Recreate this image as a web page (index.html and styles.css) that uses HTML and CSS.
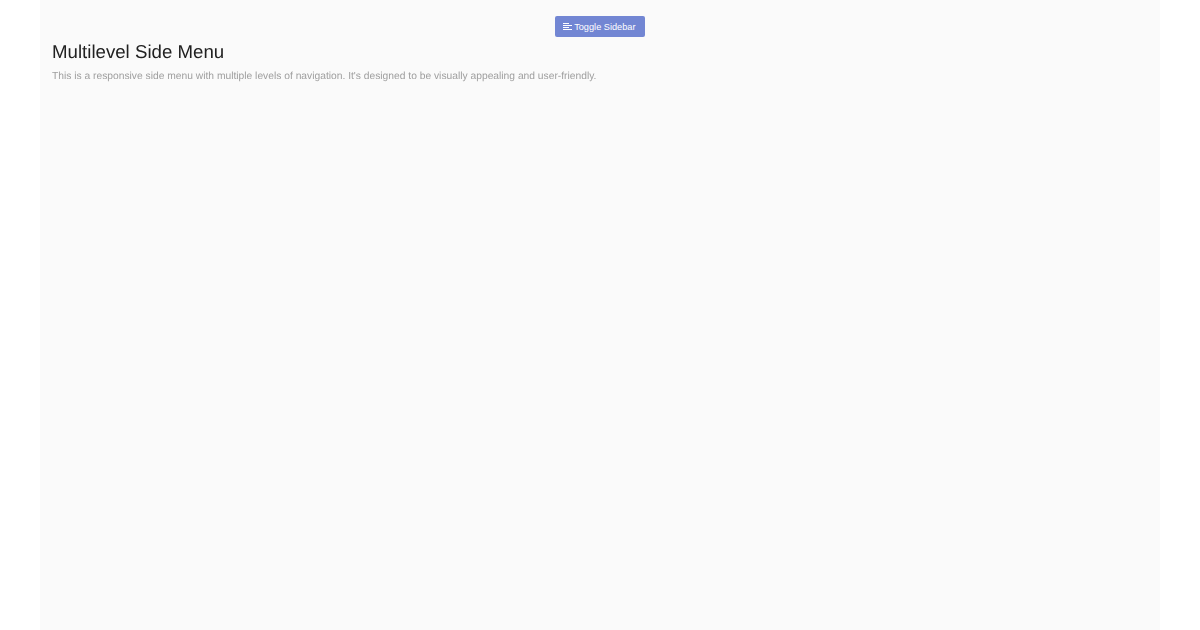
FILE: index.html
```html
<!DOCTYPE html>
<html lang="en">
    <head>
        <meta charset="UTF-8">
        <meta name="viewport" content="width=device-width, initial-scale=1.0">
        <title>Multilevel Side Menu</title>
        <link rel="stylesheet" href="styles.css">
    </head>
    <body>
        <main class="content">
            <div class="toolbar">
                <button class="toggle-btn" type="button">
                    <svg class="toggle-icon" viewBox="0 0 9 8" width="9" height="8" aria-hidden="true">
                        <path d="M0 0.5H6M0 2.5H9M0 4.5H6M0 6.5H9" stroke="#fff" stroke-width="1" fill="none"/>
                    </svg>
                    Toggle Sidebar
                </button>
            </div>
            <div class="intro">
                <h1>Multilevel Side Menu</h1>
                <p>This is a responsive side menu with multiple levels of navigation. It's designed to be visually appealing and user-friendly.</p>
            </div>
        </main>
    </body>
</html>
```

FILE: styles.css
```css
* {
    box-sizing: border-box;
}
html, body {
    height: 100%;
}
body {
    margin: 0;
    background-color: #fff;
    font-family: "Liberation Sans", Arial, sans-serif;
    text-rendering: geometricPrecision;
    overflow: hidden;
}
.content {
    width: 1120px;
    height: 630px;
    margin: 0 auto;
    padding: 16px 12px;
    background-color: #fafafa;
}
.toolbar {
    display: flex;
    justify-content: center;
}
.toggle-btn {
    display: flex;
    align-items: center;
    gap: 2px;
    width: 90.67px;
    height: 21px;
    padding: 0 0 0 8.5px;
    border: none;
    border-radius: 2px;
    background-color: #7286d3;
    color: #fff;
    font-family: inherit;
    font-size: 9.2px;
    white-space: nowrap;
}
.intro {
    will-change: transform;
}
h1 {
    margin: 4px 0 0;
    font-size: 18.67px;
    font-weight: 400;
    line-height: 22px;
    color: #212121;
}
p {
    margin: 7px 0 0;
    font-size: 10.27px;
    line-height: 14px;
    color: #9e9e9e;
}
```
